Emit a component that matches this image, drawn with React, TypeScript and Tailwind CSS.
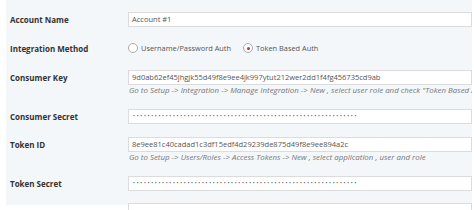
import React from "react";

const font = { fontFamily: '"Open Sans", "Liberation Sans", sans-serif' };

function Label({ children }: { children?: React.ReactNode }) {
  return (
    <div className="w-[122px] shrink-0 pl-[4px] h-[15px] flex items-center text-[8px] font-bold text-[#333]">
      {children}
    </div>
  );
}

function Input({ children, dots }: { children?: React.ReactNode; dots?: boolean }) {
  return (
    <div className="h-[15px] w-full border border-[#dcdcdc] bg-white flex items-center pl-[3px] text-[7.5px] text-[#555] whitespace-nowrap overflow-hidden">
      {dots ? (
        <span className="pl-[1px] text-[5px] tracking-[1.75px] text-[#555]">{"•".repeat(62)}</span>
      ) : (
        children
      )}
    </div>
  );
}

function Hint({ children }: { children: React.ReactNode }) {
  return (
    <div className="h-[12px] flex items-center text-[7.9px] italic text-[#777] whitespace-nowrap overflow-hidden pl-[1px]">
      {children}
    </div>
  );
}

function Radio({ checked, label }: { checked?: boolean; label: string }) {
  return (
    <div className="flex items-center gap-[3px]">
      <div className="w-[10px] h-[10px] rounded-full border border-[#aaa] bg-white flex items-center justify-center">
        {checked && <div className="w-[3px] h-[3px] rounded-full bg-[#c0392b]" />}
      </div>
      <span className="text-[7.4px] text-[#555]">{label}</span>
    </div>
  );
}

export default function App() {
  return (
    <div className="w-[474px] h-[210px] bg-white overflow-hidden" style={font}>
      <div className="ml-[6px] w-[466px] h-[205px] bg-[#f3f7fa] pt-[6px]">
        <div className="flex py-[6px]">
          <Label>Account Name</Label>
          <div className="flex-1 min-w-0">
            <Input>Account #1</Input>
          </div>
        </div>
        <div className="flex items-center h-[31px]">
          <Label>Integration Method</Label>
          <div className="flex items-center gap-[12px]">
            <Radio label="Username/Password Auth" />
            <Radio checked label="Token Based Auth" />
          </div>
        </div>
        <div className="flex py-[6px]">
          <Label>Consumer Key</Label>
          <div className="flex-1 min-w-0">
            <Input>9d0ab62ef45jhgjk55d49f8e9ee4jk997ytut212wer2dd1f4fg456735cd9ab</Input>
            <Hint>
              Go to Setup -&gt; Integration -&gt; Manage Integration -&gt; New , select user role and check "Token Based Auth"
            </Hint>
          </div>
        </div>
        <div className="flex py-[6px]">
          <Label>Consumer Secret</Label>
          <div className="flex-1 min-w-0">
            <Input dots />
          </div>
        </div>
        <div className="flex pt-[7px] pb-[6px]">
          <Label>Token ID</Label>
          <div className="flex-1 min-w-0">
            <Input>8e9ee81c40cadad1c3df15edf4d29239de875d49f8e9ee894a2c</Input>
            <Hint>
              Go to Setup -&gt; Users/Roles -&gt; Access Tokens -&gt; New , select application , user and role
            </Hint>
          </div>
        </div>
        <div className="flex py-[6px]">
          <Label>Token Secret</Label>
          <div className="flex-1 min-w-0">
            <Input dots />
          </div>
        </div>
        <div className="flex py-[6px]">
          <Label />
          <div className="flex-1 min-w-0">
            <Input />
          </div>
        </div>
      </div>
    </div>
  );
}
